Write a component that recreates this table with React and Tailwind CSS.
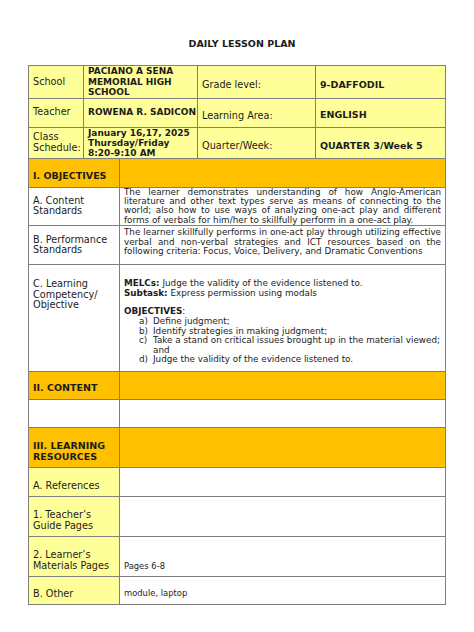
import React from "react";

const Y = "bg-[#ffff99]";
const O = "bg-[#ffc000]";
const cell = "border border-[#7f7f7f] px-[4px]";
const lab = "text-[9.7px] leading-[10.5px]";
const bold = "text-[9.5px] leading-[10.5px] font-bold";
const body = "text-[8.8px] leading-[9.4px]";

// lines broken as in the source document; every line but the last is justified
const Justified = ({ lines }) => (
  <div>
    {lines.map((l, i) => (
      <div key={i} className={i < lines.length - 1 ? "text-justify [text-align-last:justify]" : ""}>
        {l}
      </div>
    ))}
  </div>
);

export default function App() {
  return (
    <div className="w-[474px] h-[632px] bg-white font-['DejaVu_Sans',sans-serif] text-[#1c1c1c]">
      <h1 className="pt-[38px] pl-[10px] text-center text-[9.5px] font-bold leading-[12px]">DAILY LESSON PLAN</h1>

      <table className="ml-[28px] mt-[15px] w-[417px] table-fixed border-collapse border-[1.5px] border-[#7f7f7f]">
        <colgroup>
          <col className="w-[55px]" />
          <col className="w-[36px]" />
          <col className="w-[78px]" />
          <col className="w-[118px]" />
          <col className="w-[130px]" />
        </colgroup>
        <tbody>
          {/* header block */}
          <tr className={`h-[32px] ${Y}`}>
            <td className={`${cell} ${lab}`}>School</td>
            <td colSpan={2} className={`${cell} text-[9px] leading-[10.5px] font-bold`}>
              PACIANO A SENA MEMORIAL HIGH SCHOOL
            </td>
            <td className={`${cell} ${lab} align-bottom pb-[7px]`}>Grade level:</td>
            <td className={`${cell} ${bold} align-bottom pb-[7px]`}>9-DAFFODIL</td>
          </tr>
          <tr className={`h-[29px] ${Y}`}>
            <td className={`${cell} ${lab}`}>Teacher</td>
            <td colSpan={2} className={`${cell} pr-0 text-[9px] leading-[10.5px] font-bold whitespace-nowrap`}>
              ROWENA R. SADICON
            </td>
            <td className={`${cell} ${lab} align-bottom pb-[5px]`}>Learning Area:</td>
            <td className={`${cell} ${bold} align-bottom pb-[6px]`}>ENGLISH</td>
          </tr>
          <tr className={`h-[30px] ${Y}`}>
            <td className={`${cell} ${lab}`}>Class Schedule:</td>
            <td colSpan={2} className={`${cell} text-[9px] font-bold leading-[10px]`}>
              January 16,17, 2025
              <br />
              Thursday/Friday
              <br />
              8:20-9:10 AM
            </td>
            <td className={`${cell} ${lab} align-bottom pb-[6px]`}>Quarter/Week:</td>
            <td className={`${cell} ${bold} align-bottom pb-[6px]`}>QUARTER 3/Week 5</td>
          </tr>

          {/* I. objectives */}
          <tr className={`h-[29px] ${O}`}>
            <td colSpan={2} className={`${cell} ${bold} align-bottom pb-[5px]`}>I. OBJECTIVES</td>
            <td colSpan={3} className={cell}></td>
          </tr>
          <tr className="h-[37px]">
            <td colSpan={2} className={`${cell} ${lab}`}>
              A. Content
              <br />
              Standards
            </td>
            <td colSpan={3} className={`${cell} ${body} align-top`}>
              <Justified
                lines={[
                  "The learner demonstrates understanding of how Anglo-American",
                  "literature and other text types serve as means of connecting to the",
                  "world; also how to use ways of analyzing one-act play and different",
                  "forms of verbals for him/her to skillfully perform in a one-act play.",
                ]}
              />
            </td>
          </tr>
          <tr className="h-[39px]">
            <td colSpan={2} className={`${cell} ${lab}`}>
              B. Performance
              <br />
              Standards
            </td>
            <td colSpan={3} className={`${cell} ${body} align-top pt-[2px]`}>
              <Justified
                lines={[
                  "The learner skillfully performs in one-act play through utilizing effective",
                  "verbal and non-verbal strategies and ICT resources based on the",
                  "following criteria: Focus, Voice, Delivery, and Dramatic Conventions",
                ]}
              />
            </td>
          </tr>
          <tr className="h-[107px]">
            <td colSpan={2} className={`${cell} ${lab} align-top pt-[14px]`}>
              C. Learning
              <br />
              Competency/
              <br />
              Objective
            </td>
            <td colSpan={3} className={`${cell} ${body} leading-[9.6px] align-top pt-[14px]`}>
              <p>
                <b>MELCs:</b> Judge the validity of the evidence listened to.
              </p>
              <p>
                <b>Subtask:</b> Express permission using modals
              </p>
              <p className="mt-[9px]">
                <b>OBJECTIVES</b>:
              </p>
              <ol className="pl-[15px]">
                {[
                  ["a)", "Define judgment;"],
                  ["b)", "Identify strategies in making judgment;"],
                  ["c)", <>Take a stand on critical issues brought up in the material viewed;<br />and</>],
                  ["d)", "Judge the validity of the evidence listened to."],
                ].map(([k, t]) => (
                  <li key={k} className="flex">
                    <span className="w-[14px] shrink-0">{k}</span>
                    <span className="whitespace-nowrap">{t}</span>
                  </li>
                ))}
              </ol>
            </td>
          </tr>

          {/* II. content */}
          <tr className={`h-[28px] ${O}`}>
            <td colSpan={2} className={`${cell} ${bold} align-bottom pb-[6px]`}>II. CONTENT</td>
            <td colSpan={3} className={cell}></td>
          </tr>
          <tr className="h-[28px]">
            <td colSpan={2} className={cell}></td>
            <td colSpan={3} className={cell}></td>
          </tr>

          {/* III. learning resources */}
          <tr className={`h-[40px] ${O}`}>
            <td colSpan={2} className={`${cell} ${bold} align-bottom pb-[5px]`}>
              III. LEARNING
              <br />
              RESOURCES
            </td>
            <td colSpan={3} className={cell}></td>
          </tr>
          <tr className="h-[29px]">
            <td colSpan={2} className={`${cell} ${Y} ${lab} align-bottom pb-[5px]`}>A. References</td>
            <td colSpan={3} className={cell}></td>
          </tr>
          <tr className="h-[40px]">
            <td colSpan={2} className={`${cell} ${Y} ${lab} align-bottom pb-[5px]`}>
              1. Teacher’s
              <br />
              Guide Pages
            </td>
            <td colSpan={3} className={cell}></td>
          </tr>
          <tr className="h-[40px]">
            <td colSpan={2} className={`${cell} ${Y} ${lab} align-bottom pb-[5px]`}>
              2. Learner’s
              <br />
              Materials Pages
            </td>
            <td colSpan={3} className={`${cell} text-[8.4px] leading-[10px] align-bottom pb-[5px]`}>Pages 6-8</td>
          </tr>
          <tr className="h-[28px]">
            <td colSpan={2} className={`${cell} ${Y} ${lab} align-bottom pb-[5px]`}>B. Other</td>
            <td colSpan={3} className={`${cell} text-[8.4px] leading-[10px] align-bottom pb-[6px]`}>module, laptop</td>
          </tr>
        </tbody>
      </table>
    </div>
  );
}
